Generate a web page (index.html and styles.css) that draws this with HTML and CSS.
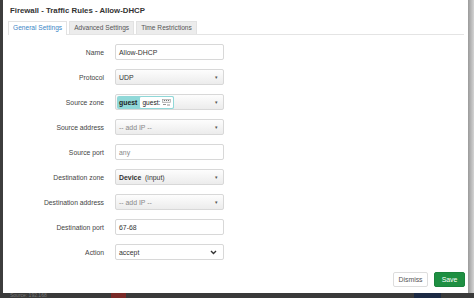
FILE: index.html
```html
<!DOCTYPE html>
<html lang="en">
<head>
    <meta charset="UTF-8">
    <title>Firewall - Traffic Rules - Allow-DHCP</title>
    <link rel="stylesheet" href="styles.css">
</head>
<body>
    <div class="screen">
        <div class="edge-left"></div>

        <div class="modal">
            <h3 class="title">Firewall - Traffic Rules - Allow-DHCP</h3>

            <ul class="tabs">
                <li class="tab active">General Settings</li>
                <li class="tab">Advanced Settings</li>
                <li class="tab">Time Restrictions</li>
            </ul>

            <div class="form">
                <div class="row">
                    <label>Name</label>
                    <div class="field input">Allow-DHCP</div>
                </div>
                <div class="row">
                    <label>Protocol</label>
                    <div class="field select">UDP<span class="caret">&#9662;</span></div>
                </div>
                <div class="row">
                    <label>Source zone</label>
                    <div class="field select zone">
                        <span class="zone-badge"><b>guest</b><span class="iface">guest:
                            <svg width="9" height="7" viewBox="0 0 9 7">
                                <rect x="0.5" y="0.5" width="8" height="3" fill="#eee" stroke="#999" stroke-width="0.6"/>
                                <path d="M2 1.5h1M4 1.5h1M6 1.5h1" stroke="#555" stroke-width="0.8"/>
                                <path d="M1 5.5h3M5 6h3" stroke="#777" stroke-width="0.8"/>
                            </svg></span></span>
                        <span class="caret">&#9662;</span>
                    </div>
                </div>
                <div class="row">
                    <label>Source address</label>
                    <div class="field select muted">-- add IP --<span class="caret">&#9662;</span></div>
                </div>
                <div class="row">
                    <label>Source port</label>
                    <div class="field input muted">any</div>
                </div>
                <div class="row">
                    <label>Destination zone</label>
                    <div class="field select"><span><b>Device</b>&nbsp; (input)</span><span class="caret">&#9662;</span></div>
                </div>
                <div class="row">
                    <label>Destination address</label>
                    <div class="field select muted">-- add IP --<span class="caret">&#9662;</span></div>
                </div>
                <div class="row">
                    <label>Destination port</label>
                    <div class="field input">67-68</div>
                </div>
                <div class="row">
                    <label>Action</label>
                    <div class="field input native">accept
                        <svg class="chev" width="7" height="5" viewBox="0 0 7 5"><path d="M1 1l2.5 2.5L6 1" fill="none" stroke="#333" stroke-width="1.4"/></svg>
                    </div>
                </div>
            </div>

            <div class="footer">
                <button class="btn">Dismiss</button>
                <button class="btn save">Save</button>
            </div>
        </div>

        <div class="edge-right"></div>

        <div class="taskbar">
            <span class="tb-text">Source: 192.168</span>
            <span class="tb-red"></span>
            <span class="tb-gap"></span>
            <span class="tb-navy"></span>
        </div>
    </div>
</body>
</html>
```

FILE: styles.css
```css
* {
    margin: 0;
    padding: 0;
    box-sizing: border-box;
}

body {
    background: #4a4a4a;
    font-family: "Liberation Sans", Arial, sans-serif;
    color: #404040;
}

.screen {
    width: 474px;
    height: 298px;
    display: grid;
    grid-template-columns: 3px 1fr 6px;
    grid-template-rows: 293px 5px;
    overflow: hidden;
}

.edge-left {
    background: #3d3d3d;
}

.edge-right {
    background: linear-gradient(to right, #9a9a9a, #d4d4d4);
}

.modal {
    background: #fff;
    display: flex;
    flex-direction: column;
    padding: 6px 3px 0 5px;
}

.title {
    font-size: 7.8px;
    font-weight: bold;
    color: #333;
    padding-left: 2px;
    height: 15px;
    line-height: 9px;
}

.tabs {
    list-style: none;
    display: flex;
    gap: 2px;
    border-bottom: 1px solid #e4e4e4;
    height: 14px;
    margin-right: 1px;
}

.tab {
    font-size: 6.6px;
    line-height: 12px;
    padding: 0 4px;
    color: #555;
    background: #ececec;
    border: 1px solid #e2e2e2;
    border-bottom: none;
}

.tab.active {
    background: #fff;
    color: #3b86c6;
    height: 14px;
}

.form {
    display: flex;
    flex-direction: column;
    gap: 9px;
    padding-top: 9px;
}

.row {
    display: flex;
    align-items: center;
    height: 16px;
}

.row label {
    width: 96px;
    text-align: right;
    font-size: 6.8px;
    color: #444;
    margin-right: 11px;
}

.field {
    width: 109px;
    height: 16px;
    border: 1px solid #d8d8d8;
    border-radius: 2px;
    font-size: 6.9px;
    color: #333;
    display: flex;
    align-items: center;
    padding: 0 3px;
}

.input {
    background: #fff;
}

.select {
    background: linear-gradient(#fdfdfd, #ececec);
    justify-content: space-between;
}

.muted {
    color: #888;
}

.caret {
    font-size: 5px;
    color: #555;
    margin-right: 2px;
}

.native {
    justify-content: space-between;
}

.chev {
    margin-right: 3px;
}

.zone {
    padding-left: 1px;
}

.zone-badge {
    display: flex;
    align-items: center;
    height: 13px;
    background: #90d8d8;
    border-radius: 2px;
    padding-left: 2px;
    font-size: 6.9px;
    color: #222;
}

.iface {
    display: flex;
    align-items: center;
    gap: 2px;
    margin-left: 2px;
    height: 13px;
    background: #fff;
    border: 1px solid #90d8d8;
    border-radius: 2px;
    padding: 0 2px;
    font-size: 6.6px;
}

.footer {
    margin-top: auto;
    display: flex;
    justify-content: flex-end;
    gap: 6px;
    padding-bottom: 6px;
}

.btn {
    font-family: "Liberation Sans", Arial, sans-serif;
    font-size: 6.9px;
    height: 15px;
    width: 35px;
    border: 1px solid #ddd;
    border-radius: 2px;
    background: #fff;
    color: #555;
}

.save {
    width: 31px;
    background: #1e8f42;
    border-color: #1a843c;
    color: #fff;
}

.taskbar {
    grid-column: 1 / 4;
    background: #3a3a3a;
    display: flex;
}

.tb-text {
    font-size: 5px;
    line-height: 5px;
    color: #777;
    width: 111px;
    padding-left: 10px;
    overflow: hidden;
}

.tb-red {
    width: 15px;
    background: #7a2a28;
}

.tb-gap {
    flex: 1;
}

.tb-navy {
    width: 27px;
    background: #1c2a44;
    margin-right: 33px;
}
```
